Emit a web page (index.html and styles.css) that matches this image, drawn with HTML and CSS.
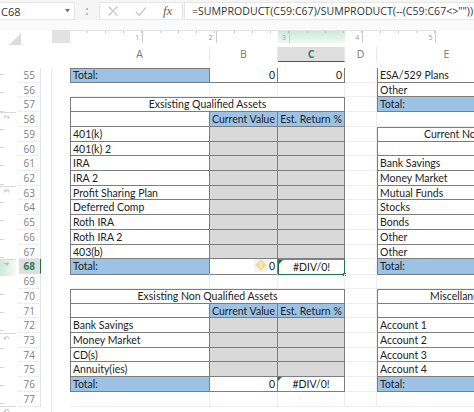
FILE: index.html
```html
<!DOCTYPE html>
<html lang="en">
<head>
  <meta charset="UTF-8">
  <title>Retirement worksheet</title>
  <link rel="stylesheet" href="styles.css">
</head>
<body>
<div class="formula-bar">
  <div class="name-box">
    <span>C68</span>
    <svg width="5" height="4" viewBox="0 0 5 4"><path d="M0 0h5L2.5 3.5z" fill="#777"/></svg>
  </div>
  <div class="grip"></div>
  <div class="fx-buttons">
    <svg width="12" height="12" viewBox="0 0 12 12"><path d="M1.5 1.5l9 9M10.5 1.5l-9 9" stroke="#c8c8c8" stroke-width="1.2" fill="none"/></svg>
    <svg width="12" height="12" viewBox="0 0 12 12"><path d="M1 7l3.2 3.5L11 2.5" stroke="#c8c8c8" stroke-width="1.2" fill="none"/></svg>
    <span class="fx">fx</span>
  </div>
  <div class="formula">=SUMPRODUCT(C59:C67)/SUMPRODUCT(--(C59:C67&lt;&gt;""))</div>
</div>

<div class="ruler">
  <div class="ruler-corner"><svg width="12" height="12" viewBox="0 0 12 12"><path d="M12 0v12H0z" fill="#dcdcdc"/></svg></div>
  <div class="ruler-margin"></div>
  <div class="ruler-cell">1</div>
  <div class="ruler-cell">2</div>
  <div class="ruler-cell">3</div>
  <div class="ruler-cell">4</div>
  <div class="ruler-cell">5</div>
</div>

<div class="col-heads">
  <div class="col-gutter"></div>
  <div class="col-head col-a">A</div>
  <div class="col-head col-b">B</div>
  <div class="col-head col-c selected">C</div>
  <div class="col-head col-d">D</div>
  <div class="col-head col-e">E</div>
</div>

<div class="main">
  <div class="side-ruler">
    <div class="side-cell side-first"></div>
    <div class="side-cell"><span>2</span></div>
    <div class="side-cell"><span>3</span></div>
    <div class="side-cell side-active"><span>4</span></div>
    <div class="side-cell"><span>5</span></div>
    <div class="side-cell side-last"><span>6</span></div>
  </div>

  <div class="row-nums">
    <div class="row-num">55</div>
    <div class="row-num">56</div>
    <div class="row-num">57</div>
    <div class="row-num">58</div>
    <div class="row-num">59</div>
    <div class="row-num">60</div>
    <div class="row-num">61</div>
    <div class="row-num">62</div>
    <div class="row-num">63</div>
    <div class="row-num">64</div>
    <div class="row-num">65</div>
    <div class="row-num">66</div>
    <div class="row-num">67</div>
    <div class="row-num active">68</div>
    <div class="row-num">69</div>
    <div class="row-num">70</div>
    <div class="row-num">71</div>
    <div class="row-num">72</div>
    <div class="row-num">73</div>
    <div class="row-num">74</div>
    <div class="row-num">75</div>
    <div class="row-num">76</div>
    <div class="row-num">77</div>
  </div>

  <div class="sheet">
    <div class="row">
      <div class="cell box top total">Total:</div><div class="cell box num">0</div><div class="cell box num">0</div><div class="cell"></div><div class="cell box">ESA/529 Plans</div>
    </div>
    <div class="row">
      <div class="cell"></div><div class="cell"></div><div class="cell"></div><div class="cell"></div><div class="cell box">Other</div>
    </div>
    <div class="row">
      <div class="cell box top wide">Exsisting Qualified Assets</div><div class="cell"></div><div class="cell box total">Total:</div>
    </div>
    <div class="row">
      <div class="cell box"></div><div class="cell box head">Current Value</div><div class="cell box head">Est. Return %</div><div class="cell"></div><div class="cell"></div>
    </div>
    <div class="row">
      <div class="cell box">401(k)</div><div class="cell box input"></div><div class="cell box input"></div><div class="cell"></div><div class="cell box top title-e">Current Non</div>
    </div>
    <div class="row">
      <div class="cell box">401(k) 2</div><div class="cell box input"></div><div class="cell box input"></div><div class="cell"></div><div class="cell box"></div>
    </div>
    <div class="row">
      <div class="cell box">IRA</div><div class="cell box input"></div><div class="cell box input"></div><div class="cell"></div><div class="cell box">Bank Savings</div>
    </div>
    <div class="row">
      <div class="cell box">IRA 2</div><div class="cell box input"></div><div class="cell box input"></div><div class="cell"></div><div class="cell box">Money Market</div>
    </div>
    <div class="row">
      <div class="cell box">Profit Sharing Plan</div><div class="cell box input"></div><div class="cell box input"></div><div class="cell"></div><div class="cell box">Mutual Funds</div>
    </div>
    <div class="row">
      <div class="cell box">Deferred Comp</div><div class="cell box input"></div><div class="cell box input"></div><div class="cell"></div><div class="cell box">Stocks</div>
    </div>
    <div class="row">
      <div class="cell box">Roth IRA</div><div class="cell box input"></div><div class="cell box input"></div><div class="cell"></div><div class="cell box">Bonds</div>
    </div>
    <div class="row">
      <div class="cell box">Roth IRA 2</div><div class="cell box input"></div><div class="cell box input"></div><div class="cell"></div><div class="cell box">Other</div>
    </div>
    <div class="row">
      <div class="cell box">403(b)</div><div class="cell box input"></div><div class="cell box input"></div><div class="cell"></div><div class="cell box">Other</div>
    </div>
    <div class="row">
      <div class="cell box total">Total:</div>
      <div class="cell box num warned">
        <span class="warn"><svg width="12" height="12" viewBox="0 0 12 12"><path d="M6 .8L11.2 6 6 11.2.8 6z" fill="#f5dc8c" stroke="#ecd27c" stroke-width=".8"/><path d="M6 3.2v3.4M6 7.8v1.2" stroke="#fff" stroke-width="1.2"/></svg></span>0
      </div>
      <div class="cell cur flag center">#DIV/0!</div><div class="cell"></div><div class="cell box total">Total:</div>
    </div>
    <div class="row">
      <div class="cell"></div><div class="cell"></div><div class="cell"></div><div class="cell"></div><div class="cell"></div>
    </div>
    <div class="row">
      <div class="cell box top wide">Exsisting Non Qualified Assets</div><div class="cell"></div><div class="cell box top title-misc">Miscellaneous</div>
    </div>
    <div class="row">
      <div class="cell box"></div><div class="cell box head">Current Value</div><div class="cell box head">Est. Return %</div><div class="cell"></div><div class="cell box"></div>
    </div>
    <div class="row">
      <div class="cell box">Bank Savings</div><div class="cell box input"></div><div class="cell box input"></div><div class="cell"></div><div class="cell box">Account 1</div>
    </div>
    <div class="row">
      <div class="cell box">Money Market</div><div class="cell box input"></div><div class="cell box input"></div><div class="cell"></div><div class="cell box">Account 2</div>
    </div>
    <div class="row">
      <div class="cell box">CD(s)</div><div class="cell box input"></div><div class="cell box input"></div><div class="cell"></div><div class="cell box">Account 3</div>
    </div>
    <div class="row">
      <div class="cell box">Annuity(ies)</div><div class="cell box input"></div><div class="cell box input"></div><div class="cell"></div><div class="cell box">Account 4</div>
    </div>
    <div class="row">
      <div class="cell box total">Total:</div><div class="cell box num">0</div><div class="cell box center flag">#DIV/0!</div><div class="cell"></div><div class="cell box total">Total:</div>
    </div>
    <div class="row">
      <div class="cell"></div><div class="cell"></div><div class="cell"></div><div class="cell"></div><div class="cell"></div>
    </div>
  </div>
</div>
</body>
</html>
```

FILE: styles.css
```css
html, body {
  margin: 0;
  padding: 0;
  overflow: hidden;
}

body {
  width: 474px;
  height: 412px;
  background-color: #fff;
  font-family: 'Lato', sans-serif;
  font-size: 12px;
  color: #222;
}

/* formula bar */
.formula-bar {
  display: flex;
  height: 30px;
  padding-top: 2px;
  box-sizing: border-box;
  background: linear-gradient(#f5f5f5 20px, #fafafa 20px);
}

.name-box {
  display: flex;
  align-items: center;
  justify-content: space-between;
  flex-shrink: 0;
  width: 75px;
  height: 18px;
  padding: 0 4px 0 1px;
  box-sizing: border-box;
  background-color: #fff;
  border: 1px solid #e6e6e6;
  border-left: none;
  font-family: 'Open Sans', sans-serif;
  font-size: 11px;
  color: #333;
}

.grip {
  flex-shrink: 0;
  width: 2px;
  height: 7px;
  margin: 6px 11px 0;
  border-left: 2px dotted #bbb;
  box-sizing: border-box;
}

.fx-buttons {
  display: flex;
  align-items: center;
  gap: 16px;
  flex-shrink: 0;
  width: 84px;
  height: 18px;
  padding-left: 7px;
  box-sizing: border-box;
  background-color: #fff;
  border: 1px solid #e6e6e6;
}

.fx {
  font-family: 'Liberation Serif', serif;
  font-style: italic;
  font-size: 13px;
  color: #666;
}

.formula {
  flex: 1;
  min-width: 0;
  height: 18px;
  margin-left: 1px;
  padding-left: 7px;
  line-height: 16px;
  box-sizing: border-box;
  white-space: nowrap;
  background-color: #fff;
  border: 1px solid #e6e6e6;
  border-right: none;
  font-family: 'Open Sans', sans-serif;
  font-size: 10.6px;
  color: #333;
}

/* top ruler */
.ruler {
  display: flex;
  height: 17px;
  overflow: hidden;
  background: linear-gradient(#c6e7d7, #f1f9f5) 278px 0 / 67px 13px no-repeat;
  font-family: 'Open Sans', sans-serif;
  font-size: 7px;
  color: #999;
}

.ruler-corner {
  flex-shrink: 0;
  width: 52px;
  padding: 3px 0 0 9px;
  box-sizing: border-box;
}

.ruler-margin {
  flex-shrink: 0;
  width: 18px;
  height: 13px;
  background-color: #e2e2e2;
}

.ruler-cell {
  flex-shrink: 0;
  width: 73.3px;
  height: 13px;
  padding: 2px 3px 0 0;
  box-sizing: border-box;
  text-align: right;
  border-top: 1px solid #e4e4e4;
  border-right: 1px solid #ccc;
  background: repeating-linear-gradient(90deg, transparent 0 17px, #c8c8c8 17px 18px) 0 0 / 100% 2px no-repeat;
}

/* column headers */
.col-heads {
  display: flex;
  height: 15px;
  margin-bottom: 6px;
  overflow: hidden;
  font-family: 'Open Sans', sans-serif;
  font-size: 10.5px;
  line-height: 15px;
  text-align: center;
  color: #777;
}

.col-gutter {
  width: 70px;
  flex-shrink: 0;
}

.col-head {
  flex-shrink: 0;
  box-sizing: border-box;
  border-right: 1px solid #e8e8e8;
}

.col-a { width: 140px; }
.col-b { width: 68px; }
.col-c { width: 67px; }
.col-d { width: 32px; }
.col-e { width: 140px; }

.selected {
  background-color: #dedede;
  border-bottom: 1px solid #217346;
  color: #2f7d58;
  font-weight: bold;
}

/* body */
.main {
  display: flex;
  height: 344px;
  overflow: hidden;
}

.side-ruler {
  flex-shrink: 0;
  width: 16px;
  margin-right: 3px;
  font-family: 'Open Sans', sans-serif;
  font-size: 7px;
  color: #aaa;
  background: repeating-linear-gradient(transparent 0 6px, #d4d4d4 6px 7px, transparent 7px 18.3px) 0 0 / 4px 100% no-repeat;
}

.side-cell {
  height: 73.5px;
  border-top: 1px solid #d8d8d8;
  box-sizing: border-box;
}

.side-first {
  height: 44px;
  border-top: none;
}

.side-last {
  height: 8px;
  overflow: hidden;
}

.side-cell span {
  display: block;
  width: 9px;
  margin-left: 2px;
  line-height: 8px;
  text-align: center;
  transform: rotate(-90deg);
}

.side-active {
  background: linear-gradient(90deg, #cfe9dc, #f4fbf7) 0 0 / 100% 16px no-repeat;
}

.row-nums {
  flex-shrink: 0;
  width: 33px;
  border-right: 1px solid #e8e8e8;
  box-sizing: border-box;
}

.row-num {
  width: 22px;
  height: 14.73px;
  padding-right: 5px;
  box-sizing: border-box;
  line-height: 14px;
  text-align: right;
  font-family: 'Open Sans', sans-serif;
  font-size: 10px;
  color: #808080;
  border-right: 1px solid #e4e4e4;
  border-bottom: 1px dotted #e2e2e2;
}

.row-num.active {
  background-color: #dedede;
  color: #2f7d58;
  font-weight: bold;
  border-right-color: #217346;
}

.sheet {
  flex-shrink: 0;
  width: 404px;
  margin-left: 18px;
}

.row {
  display: grid;
  grid-template-columns: 140px 68px 67px 32px 140px;
  height: 14.73px;
}

.cell {
  position: relative;
  box-sizing: border-box;
  padding: 0 2px;
  line-height: 14px;
  font-size: 10.5px;
  white-space: nowrap;
  overflow: hidden;
  border-right: 1px solid #eee;
  border-bottom: 1px solid #eee;
}

.box {
  border-right-color: #7d7d7d;
  border-bottom-color: #7d7d7d;
}

/* left edge for A and E, top edge where a block starts */
.row > .box:first-child,
.row > .cell:nth-child(5).box,
.row > .wide + .cell + .box {
  border-left: 1px solid #7d7d7d;
}

.top {
  border-top: 1px solid #7d7d7d;
  line-height: 13px;
}

.total {
  background-color: #9cc2e5;
}

.head {
  padding: 0 1px;
  background-color: #9cc2e5;
  text-align: center;
}

.input {
  background-color: #d9d9d9;
}

.num {
  text-align: right;
}

.center {
  text-align: center;
}

.wide {
  grid-column: span 3;
  text-align: center;
}

.title-e {
  padding-left: 46px;
}

.title-misc {
  padding-left: 52px;
}

.cur {
  overflow: visible;
  border: 1px solid #217346;
  border-top-color: #5d9a7c;
}

.cur::after {
  content: "";
  position: absolute;
  right: -2px;
  bottom: -2px;
  width: 3px;
  height: 3px;
  background-color: #217346;
}

.flag::before {
  content: "";
  position: absolute;
  left: 0;
  top: 0;
  border-top: 4px solid #217346;
  border-right: 4px solid transparent;
}

.warned {
  overflow: visible;
}

.warn {
  position: absolute;
  left: 44px;
  top: 0;
  width: 14px;
  height: 13px;
  text-align: center;
  background-color: #f4f4f4;
}
```
